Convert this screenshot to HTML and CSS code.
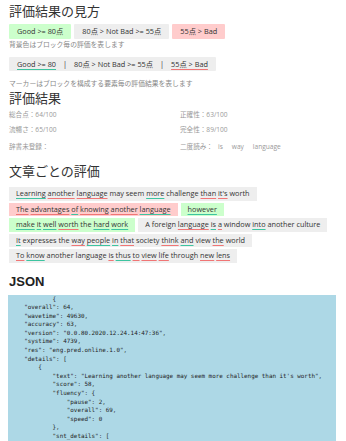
FILE: index.html
```html
<!DOCTYPE html>
<html lang="ja">
<head>
<meta charset="utf-8">
<link rel="stylesheet" href="styles.css">
</head>
<body>
<div class="page">
  <h2 class="title t1">評価結果の見方</h2>
  <div class="legend">
    <span class="chip good">Good &gt;= 80点</span>
    <span class="chip normal">80点 &gt; Not Bad &gt;= 55点</span>
    <span class="chip bad">55点 &gt; Bad</span>
  </div>
  <p class="caption c1">背景色はブロック毎の評価を表します</p>
  <div class="legend l2">
    <span class="chip normal"><span class="u-good">Good &gt;= 80</span><span class="sep">|</span>80点 &gt; Not Bad &gt;= 55点<span class="sep">|</span><span class="u-bad">55点 &gt; Bad</span></span>
  </div>
  <p class="caption c2">マーカーはブロックを構成する要素毎の評価結果を表します</p>

  <h2 class="title t2">評価結果</h2>
  <div class="results">
    <div class="res">総合点：64/100</div>
    <div class="res">正確性：63/100</div>
    <div class="res">流暢さ：65/100</div>
    <div class="res">完全性：89/100</div>
    <div class="res tall">辞書未登録：</div>
    <div class="res tall">二度読み：<span class="w">is</span><span class="w">way</span><span class="w">language</span></div>
  </div>

  <h2 class="title t3">文章ごとの評価</h2>
  <div class="sentences">
    <div class="srow">
      <span class="sent normal"><u class="g">Learning</u> <u class="b">another</u> <u class="b">language</u> may seem <u class="g">more</u> challenge <u class="b">than</u> <u class="b">it's</u> worth</span>
    </div>
    <div class="srow">
      <span class="sent bad"><u class="b">The</u> <u class="b">advantages</u> <u class="g">of</u> <u class="b">knowing</u> <u class="b">another</u> <u class="g">language</u></span>
      <span class="sent good"><u class="g">however</u></span>
    </div>
    <div class="srow">
      <span class="sent good"><u class="g">make</u> <u class="g">it</u> <u class="g">well</u> <u class="b">worth</u> the <u class="g">hard</u> <u class="g">work</u></span>
      <span class="sent normal">A foreign <u class="b">language</u> <u class="g">is</u> <u class="b">a</u> window <u class="g">into</u> another culture</span>
    </div>
    <div class="srow">
      <span class="sent normal"><u class="g">It</u> expresses the <u class="b">way</u> <u class="g">people</u> <u class="g">in</u> <u class="b">that</u> society <u class="b">think</u> <u class="g">and</u> view <u class="b">the</u> world</span>
    </div>
    <div class="srow">
      <span class="sent normal"><u class="b">To</u> <u class="g">know</u> another language <u class="b">is</u> <u class="g">thus</u> <u class="b">to</u> <u class="b">view</u> <u class="b">life</u> through <u class="b">new</u> <u class="b">lens</u></span>
    </div>
  </div>

  <h2 class="json-title">JSON</h2>
<pre class="json">            {
    "overall": 64,
    "wavetime": 49630,
    "accuracy": 63,
    "version": "0.0.80.2020.12.24.14:47:36",
    "systime": 4739,
    "res": "eng.pred.online.1.0",
    "details": [
        {
            "text": "Learning another language may seem more challenge than it's worth",
            "score": 58,
            "fluency": {
                "pause": 2,
                "overall": 69,
                "speed": 0
            },
            "snt_details": [</pre>
</div>
</body>
</html>
```

FILE: styles.css
```css
html, body {
  margin: 0;
  padding: 0;
  background: #fff;
}

body {
  font-family: "Open Sans", "Noto Sans CJK JP", sans-serif;
  color: #333;
  overflow: hidden;
  height: 441px;
}

.page {
  padding: 0 10px 0 8px;
}

.title {
  font-family: "Noto Sans CJK JP", sans-serif;
  font-weight: 400;
  font-size: 13px;
  line-height: 18px;
  color: #333;
  margin: 0;
  padding-left: 1px;
}

.t1 { margin-top: 2px; margin-bottom: 4px; }
.t2 { margin-top: 1px; }
.t3 { margin-top: 6px; }

.legend {
  display: flex;
  gap: 3px;
  padding-left: 1px;
}

.chip {
  display: inline-block;
  font-size: 7.3px;
  line-height: 15px;
  height: 15px;
  padding: 0 8px;
  border-radius: 1px;
  color: #333;
}

.l2 { margin-top: 8px; }
.l2 .chip { line-height: 14px; height: 14px; }

.good { background: #ccffcc; }
.normal { background: #eeeeee; }
.bad { background: #ffcccc; }

.sep {
  margin: 0 7px;
}

.u-good, .u-bad, u {
  text-decoration: underline;
  text-decoration-thickness: 1.2px;
  text-underline-offset: 1.5px;
}

.u-good, u.g { text-decoration-color: #3dc4a0; }
.u-bad, u.b { text-decoration-color: #f07575; }

.caption {
  margin: 0;
  font-family: "Noto Sans CJK JP", sans-serif;
  font-size: 6.8px;
  line-height: 10px;
  color: #888;
  padding-left: 1px;
}

.c2 { margin-top: 7px; }

.results {
  display: grid;
  grid-template-columns: 171px 1fr;
  padding-left: 1px;
}

.res {
  font-family: "Open Sans", "Noto Sans CJK JP", sans-serif;
  font-size: 6.6px;
  line-height: 15px;
  color: #999;
}

.res.tall { line-height: 19px; }

.w {
  margin-left: 5px;
  margin-right: 4px;
}

.sentences {
  margin-top: 7px;
  display: flex;
  flex-direction: column;
  gap: 2px;
  padding-left: 1px;
}

.srow {
  display: flex;
  gap: 3px;
}

.sent {
  display: inline-block;
  font-size: 7.3px;
  line-height: 13.5px;
  height: 13.5px;
  padding: 0 7px;
  color: #333;
  white-space: nowrap;
}

.json-title {
  font-family: "Liberation Sans", Arial, sans-serif;
  font-weight: 700;
  font-size: 13px;
  line-height: 18px;
  margin: 10px 0 4px;
  color: #222;
  padding-left: 1px;
}

.json {
  margin: 0;
  background: #add8e6;
  font-family: "DejaVu Sans Mono", monospace;
  font-size: 5.9px;
  line-height: 8.6px;
  color: #222;
  padding: 0 2px 20px;
  white-space: pre;
  overflow: hidden;
}
```
